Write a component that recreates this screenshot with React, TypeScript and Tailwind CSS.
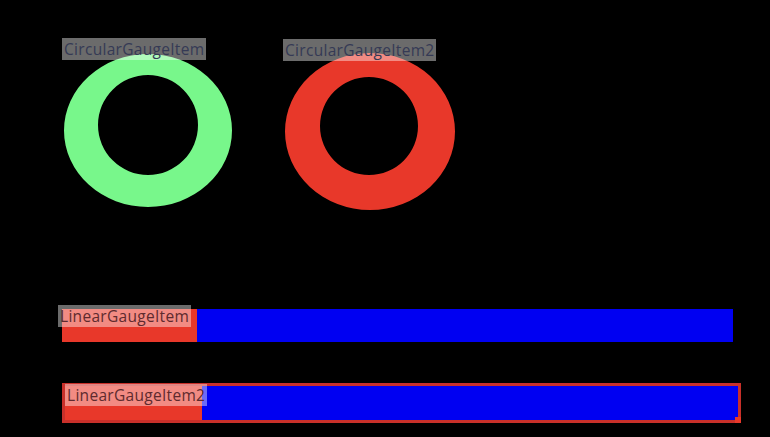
const labelFont = { fontFamily: '"Open Sans", "Noto Sans", sans-serif' };

type RingProps = {
  color: string;
  outer: { cx: number; cy: number; rx: number; ry: number };
  inner: { cx: number; cy: number; r: number };
};

const Ring = ({ color, outer, inner }: RingProps) => {
  const { cx, cy, rx, ry } = outer;
  const d =
    `M ${cx - rx} ${cy} a ${rx} ${ry} 0 1 0 ${rx * 2} 0 a ${rx} ${ry} 0 1 0 ${-rx * 2} 0 Z ` +
    `M ${inner.cx - inner.r} ${inner.cy} a ${inner.r} ${inner.r} 0 1 0 ${inner.r * 2} 0 a ${inner.r} ${inner.r} 0 1 0 ${-inner.r * 2} 0 Z`;
  return (
    <svg width="176" height="174" viewBox="0 0 176 174" className="block">
      <path d={d} fill={color} fillRule="evenodd" />
    </svg>
  );
};

const Label = ({ text, className }: { text: string; className: string }) => (
  <div
    style={labelFont}
    className={`absolute px-[2px] leading-[22px] text-[15.5px] tracking-[0.3px] bg-[rgba(255,255,255,0.42)] whitespace-nowrap ${className}`}
  >
    {text}
  </div>
);

export default function App() {
  return (
    <div className="w-[770px] h-[437px] bg-black overflow-hidden pt-[38px] pl-[62px] flex flex-col">
      <div className="flex items-start gap-[45px]">
        <div className="relative">
          <Ring
            color="#78f78b"
            outer={{ cx: 86, cy: 92.5, rx: 84, ry: 76.5 }}
            inner={{ cx: 86, cy: 87, r: 50 }}
          />
          <Label text="CircularGaugeItem" className="top-0 left-0 text-[#353a55]" />
        </div>
        <div className="relative mt-[1px]">
          <Ring
            color="#e8382a"
            outer={{ cx: 87, cy: 92.5, rx: 85, ry: 78.5 }}
            inner={{ cx: 86, cy: 87, r: 49 }}
          />
          <Label text="CircularGaugeItem2" className="top-0 left-0 text-[#353a55]" />
        </div>
      </div>

      <div className="relative mt-[96px] flex h-[33px] w-[671px]">
        <div className="w-[135px] bg-[#e8382a]" />
        <div className="flex-1 bg-[#0000f2]" />
        <Label text="LinearGaugeItem" className="-top-[4px] -left-[4px] text-[#5e2a2e]" />
      </div>

      <div className="relative mt-[41px] flex h-[40px] w-[679px] border-[3px] border-[#c8302a]">
        <div className="w-[137px] bg-[#e8382a]" />
        <div className="flex-1 bg-[#0000f2]" />
        <div className="absolute right-[-3px] bottom-[-3px] w-[6px] h-[6px] bg-[#e8382a]" />
        <Label text="LinearGaugeItem2" className="-top-[2px] left-0 text-[#5e2a2e]" />
      </div>
    </div>
  );
}
